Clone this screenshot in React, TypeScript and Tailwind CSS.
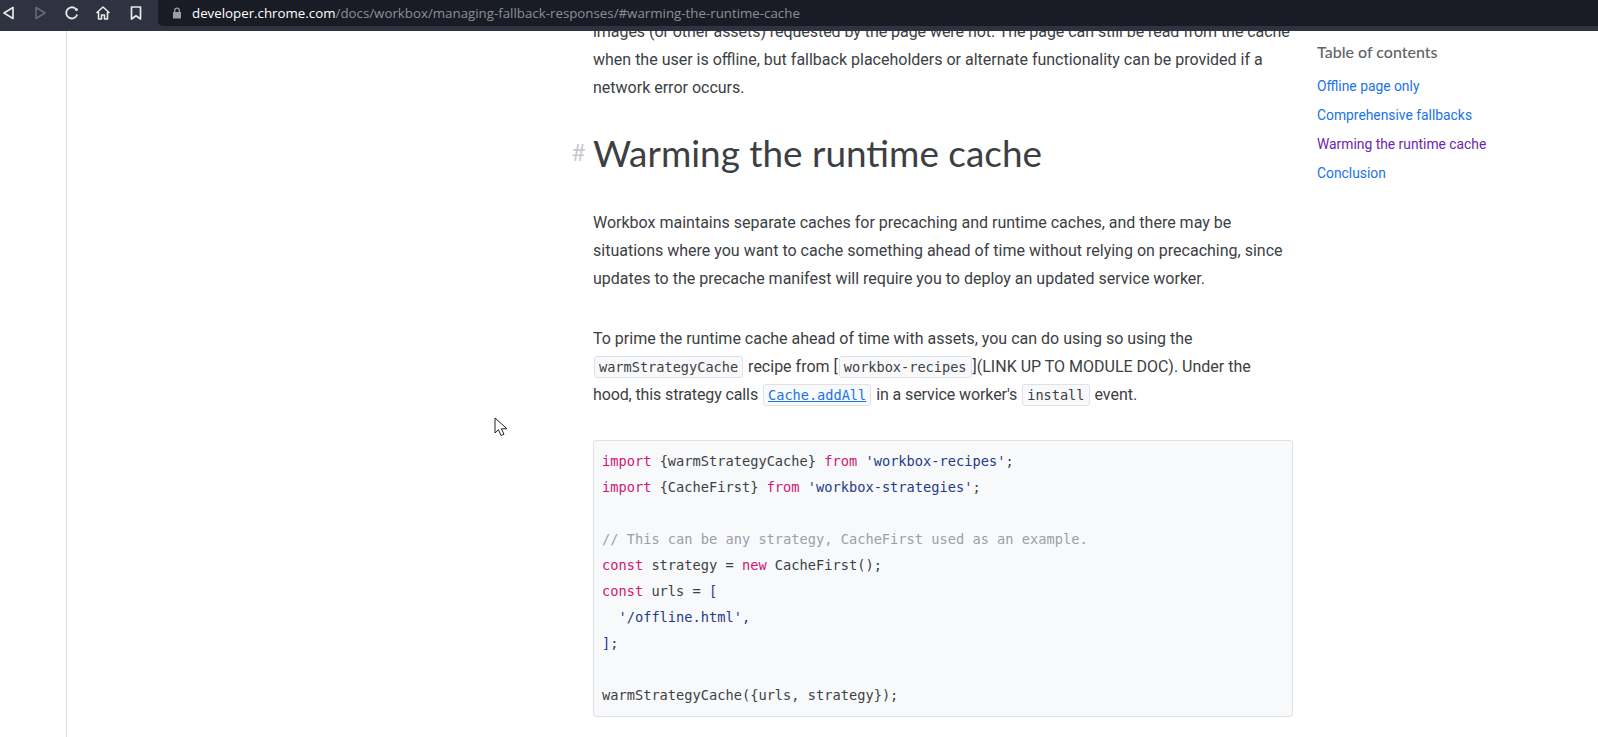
const K = ({ children }: { children: React.ReactNode }) => <span className="text-[#d01676]">{children}</span>;
const S = ({ children }: { children: React.ReactNode }) => <span className="text-[#1e3a8a]">{children}</span>;
const C = ({ children }: { children: React.ReactNode }) => (
  <code className="mx-[1px] rounded-[3px] border border-[#e0e2e8] bg-[#f8f9fa] px-[4px] py-[2px] align-baseline font-['DejaVu_Sans_Mono',monospace] text-[13.6px] leading-[16px] text-[#3c4043]">{children}</code>
);

function Toolbar() {
  return (
    <div className="flex h-[31px] shrink-0 items-start bg-[#2f3241]">
      <div className="flex h-[26px] w-[158px] shrink-0 items-center text-[#e8e8ea]">
        <svg width="16" height="16" viewBox="0 0 16 16" className="ml-[1px]" fill="none" stroke="currentColor" strokeWidth="1.7" strokeLinejoin="round"><path d="M12 2.5v11L3 8z" /></svg>
        <svg width="16" height="16" viewBox="0 0 16 16" className="ml-[15px] text-[#6a6c78]" fill="none" stroke="currentColor" strokeWidth="1.5" strokeLinejoin="round"><path d="M4 2.5v11L13 8z" /></svg>
        <svg width="16" height="16" viewBox="0 0 16 16" className="ml-[16px]" fill="none" stroke="currentColor" strokeWidth="1.8"><path d="M13.2 9.5A5.6 5.6 0 1 1 11.5 3.6" /><circle cx="12.4" cy="4.4" r="1.5" fill="currentColor" stroke="none" /></svg>
        <svg width="16" height="16" viewBox="0 0 16 16" className="ml-[15px]" fill="none" stroke="currentColor" strokeWidth="1.6" strokeLinejoin="round"><path d="M1.5 8 8 2l6.5 6M3.5 7v7h3v-4h3v4h3V7" /></svg>
        <svg width="16" height="16" viewBox="0 0 16 16" className="ml-[17px]" fill="none" stroke="currentColor" strokeWidth="1.7" strokeLinejoin="round"><path d="M3.5 2h9v12L8 10.8 3.5 14z" /></svg>
      </div>
      <div className="flex h-[26px] flex-1 items-center rounded-bl-[5px] bg-[#1a1c25] font-['Open_Sans','Noto_Sans',sans-serif] text-[13.3px]">
        <svg width="10" height="12" viewBox="0 0 10 12" className="ml-[14px] mr-[10px] text-[#9a9ca6]"><path d="M2 5V3.5a3 3 0 0 1 6 0V5h1v6.5H1V5zm1.3 0h3.4V3.5a1.7 1.7 0 0 0-3.4 0z" fill="currentColor" fillRule="evenodd" /></svg>
        <span className="text-white">developer.chrome.com</span>
        <span className="text-[#8c8e97]">/docs/workbox/managing-fallback-responses/#warming-the-runtime-cache</span>
      </div>
    </div>
  );
}

function Cursor() {
  return (
    <svg width="15" height="21" viewBox="0 0 15 21" className="absolute left-[494px] top-[417px]" fill="#fff" stroke="#222" strokeWidth="1" strokeLinejoin="round">
      <path d="M1 1v15l3.5-3.2 2.5 5.7 3-1.3-2.6-5.4H13z" />
    </svg>
  );
}

export default function App() {
  return (
    <div className="relative flex h-[737px] w-[1598px] flex-col overflow-hidden bg-white font-['Roboto',sans-serif] text-[16px] leading-[28px] text-[#3c4043]">
      <Toolbar />
      <div className="flex min-h-0 flex-1 overflow-hidden">
        <div className="w-[67px] shrink-0 border-r border-[#dcdcdc]" />
        <main className="ml-[526px] w-[700px] shrink-0">
          <div className="-mt-[13px]">
            <p className="whitespace-nowrap"><span className="tracking-[-0.05px]">images (or other assets) requested by the page were not. The page can still be read from the cache</span><br />when the user is offline, but fallback placeholders or alternate functionality can be provided if a<br />network error occurs.</p>
            <h2 className="relative mt-[23px] font-['Lato',sans-serif] text-[36.9px] leading-[56px] text-[#3c4043]">
              <span className="absolute -left-[22px] top-[1px] font-['Roboto',sans-serif] text-[23px] text-[#c8c9cc]">#</span>
              Warming the runtime cache
            </h2>
            <p className="mt-[28px]">Workbox maintains separate caches for precaching and runtime caches, and there may be<br />situations where you want to cache something ahead of time without relying on precaching, since<br />updates to the precache manifest will require you to deploy an updated service worker.</p>
            <p className="mt-[32px]">To prime the runtime cache ahead of time with assets, you can do using so using the<br /><C>warmStrategyCache</C> recipe from [<C>workbox-recipes</C>](LINK UP TO MODULE DOC). Under the<br /><span className="tracking-[-0.12px]">hood, this strategy calls</span> <C><span className="text-[#1a73e8] underline">Cache.addAll</span></C> <span className="tracking-[-0.1px]">in a service worker's</span> <C>install</C> event.</p>
            <pre className="mt-[31px] rounded-[3px] border border-[#dfe1e5] bg-[#f8f9fb] px-[8px] pb-[8px] pt-[7px] font-['DejaVu_Sans_Mono',monospace] text-[13.68px] leading-[26px] text-[#3c4043]">
              <K>import</K> {"{warmStrategyCache}"} <K>from</K> <S>'workbox-recipes'</S>;{"\n"}
              <K>import</K> {"{CacheFirst}"} <K>from</K> <S>'workbox-strategies'</S>;{"\n\n"}
              <span className="text-[#9aa0a6]">// This can be any strategy, CacheFirst used as an example.</span>{"\n"}
              <K>const</K> strategy = <K>new</K> CacheFirst();{"\n"}
              <K>const</K> urls = <S>[</S>{"\n"}
              <S>{"  '/offline.html',"}</S>{"\n"}
              <S>]</S>;{"\n\n"}
              warmStrategyCache({"{urls, strategy}"});
            </pre>
          </div>
        </main>
        <aside className="ml-[24px] flex-1 pt-[7px] font-['Roboto',sans-serif] text-[13.85px] leading-[29px] text-[#1a73e8]">
          <h3 className="mb-[6px] font-['Lato',sans-serif] text-[16px] font-medium leading-[28px] text-[#5f6368]">Table of contents</h3>
          <div>Offline page only</div>
          <div>Comprehensive fallbacks</div>
          <div className="text-[#6a27ad]">Warming the runtime cache</div>
          <div>Conclusion</div>
        </aside>
      </div>
      <Cursor />
    </div>
  );
}
